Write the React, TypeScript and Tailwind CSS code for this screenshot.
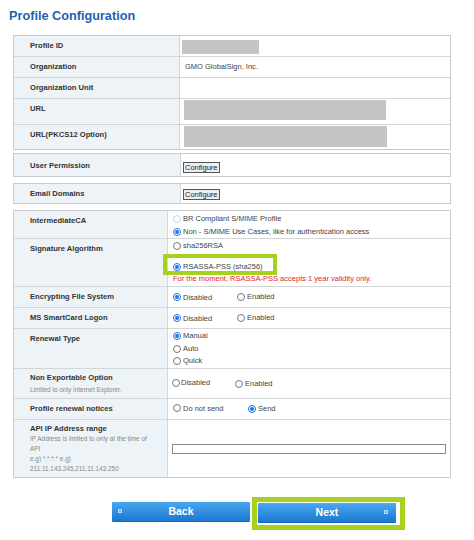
import type { ReactNode } from "react"

function Radio({ checked = false, disabled = false }: { checked?: boolean; disabled?: boolean }) {
  return (
    <span
      className={`inline-flex items-center justify-center w-[8px] h-[8px] rounded-full border bg-white shrink-0 ${
        checked ? "border-[#1a73e8]" : disabled ? "border-[#d4d4d4]" : "border-[#767676]"
      }`}
    >
      {checked && <span className="w-[4px] h-[4px] rounded-full bg-[#1a73e8]" />}
    </span>
  )
}

function Option({ checked, disabled, gap = "gap-[2px]", children }: { checked?: boolean; disabled?: boolean; gap?: string; children: ReactNode }) {
  return (
    <span className={`inline-flex items-center ${gap}`}>
      <Radio checked={checked} disabled={disabled} />
      <span>{children}</span>
    </span>
  )
}

function Row({
  label,
  sub,
  height,
  labelWidth,
  labelPad = "pt-[5px]",
  last = false,
  children,
  valueClass = "",
}: {
  label: string
  sub?: ReactNode
  height: string
  labelWidth: string
  labelPad?: string
  last?: boolean
  children?: ReactNode
  valueClass?: string
}) {
  return (
    <div className={`flex ${height} ${last ? "" : "border-b border-[#d3d6d9]"}`}>
      <div className={`${labelWidth} shrink-0 bg-[#eef3f7] border-r border-[#d3d6d9] pl-[16px] ${labelPad}`}>
        <div className="font-bold text-[7.6px] leading-[9px] text-[#333]">{label}</div>
        {sub}
      </div>
      <div className={`flex-1 text-[7.5px] text-[#444] ${valueClass}`}>{children}</div>
    </div>
  )
}

function ConfigureButton() {
  return (
    <span className="inline-flex items-center h-[11px] px-[1px] border border-[#555] bg-[#efefef] text-[7.5px] leading-[9px] text-[#222]">
      Configure
    </span>
  )
}

function BlueButton({ label, iconSide }: { label: string; iconSide: "left" | "right" }) {
  return (
    <div className="relative flex items-center justify-center w-[138px] h-[20px] rounded-[1px] bg-gradient-to-b from-[#49a8f0] to-[#1a78d0] border-b border-[#1668b8]">
      <span
        className={`absolute top-[7px] w-[4px] h-[4px] border border-white/50 bg-white/30 ${
          iconSide === "left" ? "left-[6px]" : "right-[8px]"
        }`}
      />
      <span className="text-white font-bold text-[10.5px]">{label}</span>
    </div>
  )
}

export default function App() {
  return (
    <div className="relative w-[474px] h-[540px] bg-white overflow-hidden font-['Liberation_Sans',Arial,sans-serif]">
      <h1 className="pt-[8px] pl-[9px] text-[12.7px] leading-[16px] font-bold text-[#1f62ad]">Profile Configuration</h1>

      <div className="ml-[13px] w-[438px]">
        {/* Profile basics */}
        <div className="mt-[11px] border border-[#c8cbce]">
          <Row label="Profile ID" height="h-[21px]" labelWidth="w-[166px]">
            <div className="ml-[2px] mt-[4px] w-[77px] h-[14px] bg-[#c4c4c4]" />
          </Row>
          <Row label="Organization" height="h-[21px]" labelWidth="w-[166px]" valueClass="pl-[5px] pt-[5px] leading-[9px]">
            GMO GlobalSign, Inc.
          </Row>
          <Row label="Organization Unit" height="h-[21px]" labelWidth="w-[166px]" />
          <Row label="URL" height="h-[26px]" labelWidth="w-[166px]">
            <div className="ml-[4px] mt-[1px] w-[202px] h-[20px] bg-[#c4c4c4]" />
          </Row>
          <Row label="URL(PKCS12 Option)" height="h-[24px]" labelWidth="w-[166px]" last>
            <div className="ml-[4px] mt-[1px] w-[203px] h-[21px] bg-[#c4c4c4]" />
          </Row>
        </div>

        <div className="mt-[3px] border border-[#c8cbce]">
          <Row label="User Permission" height="h-[22px]" labelWidth="w-[167px]" labelPad="pt-[7px]" last valueClass="pl-[2px] pt-[8px]">
            <ConfigureButton />
          </Row>
        </div>

        <div className="mt-[6px] border border-[#c8cbce]">
          <Row label="Email Domains" height="h-[19px]" labelWidth="w-[167px]" labelPad="pt-[5px]" last valueClass="pl-[2px] pt-[5px]">
            <ConfigureButton />
          </Row>
        </div>

        {/* Certificate options */}
        <div className="mt-[6px] border border-[#c8cbce]">
          <Row label="IntermediateCA" height="h-[28px]" labelWidth="w-[154px]" valueClass="pl-[5px] pt-[1px] leading-[13px]">
            <div className="flex">
              <Option disabled>BR Compliant S/MIME Profile</Option>
            </div>
            <div className="flex">
              <Option checked>Non - S/MIME Use Cases, like for authentication access</Option>
            </div>
          </Row>
          <Row label="Signature Algorithm" height="h-[48px]" labelWidth="w-[154px]" valueClass="pl-[5px] leading-[13px]">
            <div className="flex">
              <Option>sha256RSA</Option>
            </div>
            <div className="flex mt-[8px]">
              <Option checked>RSASSA-PSS (sha256)</Option>
            </div>
            <div className="text-[#e3242b] leading-[12px]">For the moment, RSASSA-PSS accepts 1 year validity only.</div>
          </Row>
          <Row label="Encrypting File System" height="h-[21px]" labelWidth="w-[154px]" valueClass="pl-[5px] flex items-center">
            <span className="w-[64px]">
              <Option checked>Disabled</Option>
            </span>
            <Option>Enabled</Option>
          </Row>
          <Row label="MS SmartCard Logon" height="h-[21px]" labelWidth="w-[154px]" valueClass="pl-[5px] flex items-center">
            <span className="w-[64px]">
              <Option checked>Disabled</Option>
            </span>
            <Option>Enabled</Option>
          </Row>
          <Row label="Renewal Type" height="h-[40px]" labelWidth="w-[154px]" valueClass="pl-[5px] pt-[1px] leading-[12.5px]">
            <div className="flex">
              <Option checked>Manual</Option>
            </div>
            <div className="flex">
              <Option>Auto</Option>
            </div>
            <div className="flex">
              <Option>Quick</Option>
            </div>
          </Row>
          <Row
            label="Non Exportable Option"
            height="h-[30px]"
            labelWidth="w-[154px]"
            labelPad="pt-[4px]"
            sub={<div className="mt-[3px] text-[6.4px] leading-[9px] text-[#888]">Limited to only Internet Explorer.</div>}
            valueClass="pl-[4px] flex items-center"
          >
            <span className="w-[63px]">
              <Option checked={false} gap="gap-[1px]">Disabled</Option>
            </span>
            <Option>Enabled</Option>
          </Row>
          <Row label="Profile renewal notices" height="h-[21px]" labelWidth="w-[154px]" valueClass="pl-[5px] flex items-center">
            <span className="w-[75px]">
              <Option>Do not send</Option>
            </span>
            <Option checked>Send</Option>
          </Row>
          <Row
            label="API IP Address range"
            height="h-[57px]"
            labelWidth="w-[154px]"
            labelPad="pt-[4px]"
            last
            sub={
              <div className="mt-[1px] text-[6.4px] leading-[10px] text-[#888]">
                <div>IP Address is limited to only at the time of</div>
                <div>API</div>
                <div>e.g) *.*.*.* e.g)</div>
                <div>211.11.143.245,211.11.143.250</div>
              </div>
            }
            valueClass="pl-[4px] flex items-center"
          >
            <div className="w-[274px] h-[10px] border border-[#8a8a8a] bg-white" />
          </Row>
        </div>

        {/* Actions */}
        <div className="mt-[19px] ml-[99px] flex items-start gap-[2px]">
          <div className="mt-[5px]">
            <BlueButton label="Back" iconSide="left" />
          </div>
          <div className="border-[5px] border-[#a4d21f] pl-[1px] pr-[4px] pt-[1px] pb-[2px] bg-white">
            <BlueButton label="Next" iconSide="right" />
          </div>
        </div>
      </div>

      {/* Highlight over the selected algorithm */}
      <div className="absolute left-[163px] top-[254px] w-[114px] h-[21px] border-4 border-[#a4d21f]" />
    </div>
  )
}
